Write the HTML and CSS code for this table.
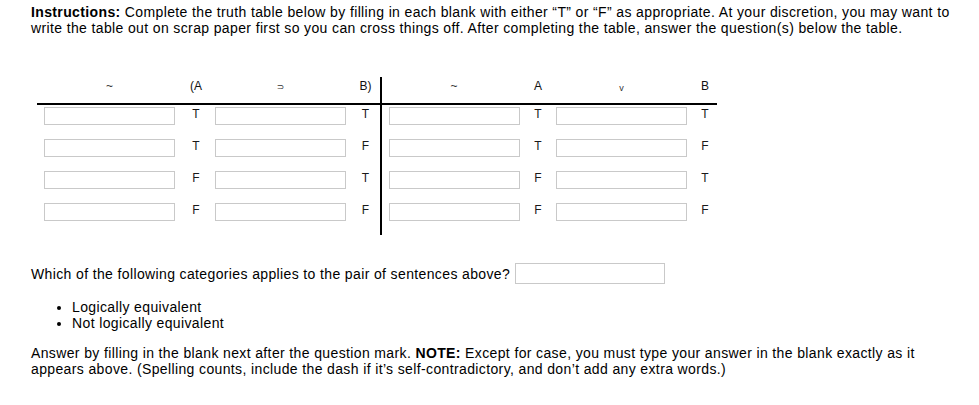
FILE: index.html
```html
<!DOCTYPE html>
<html>
<head>
<meta charset="utf-8">
<link rel="stylesheet" href="styles.css">
</head>
<body>
<div class="page">
  <p class="instr"><b>Instructions:</b> Complete the truth table below by filling in each blank with either “T” or “F” as appropriate. At your discretion, you may want to write the table out on scrap paper first so you can cross things off. After completing the table, answer the question(s) below the table.</p>

  <div class="tt">
    <div class="half left">
      <div class="row head">
        <span class="sym tilde">~</span>
        <span class="hl">(A</span>
        <span class="sym hook">⊃</span>
        <span class="hl">B)</span>
      </div>
      <div class="row"><span class="cell"><input class="blank" type="text"></span><span class="val">T</span><span class="cell"><input class="blank" type="text"></span><span class="val">T</span></div>
      <div class="row"><span class="cell"><input class="blank" type="text"></span><span class="val">T</span><span class="cell"><input class="blank" type="text"></span><span class="val">F</span></div>
      <div class="row"><span class="cell"><input class="blank" type="text"></span><span class="val">F</span><span class="cell"><input class="blank" type="text"></span><span class="val">T</span></div>
      <div class="row"><span class="cell"><input class="blank" type="text"></span><span class="val">F</span><span class="cell"><input class="blank" type="text"></span><span class="val">F</span></div>
    </div>
    <div class="half right">
      <div class="row head">
        <span class="sym tilde">~</span>
        <span class="hl">A</span>
        <span class="sym vee">v</span>
        <span class="hl">B</span>
      </div>
      <div class="row"><span class="cell"><input class="blank" type="text"></span><span class="val">T</span><span class="cell"><input class="blank" type="text"></span><span class="val">T</span></div>
      <div class="row"><span class="cell"><input class="blank" type="text"></span><span class="val">T</span><span class="cell"><input class="blank" type="text"></span><span class="val">F</span></div>
      <div class="row"><span class="cell"><input class="blank" type="text"></span><span class="val">F</span><span class="cell"><input class="blank" type="text"></span><span class="val">T</span></div>
      <div class="row"><span class="cell"><input class="blank" type="text"></span><span class="val">F</span><span class="cell"><input class="blank" type="text"></span><span class="val">F</span></div>
    </div>
  </div>

  <div class="question">
    <span class="qtext">Which of the following categories applies to the pair of sentences above?</span>
    <input class="answer" type="text">
  </div>

  <ul class="choices">
    <li>Logically equivalent</li>
    <li>Not logically equivalent</li>
  </ul>

  <p class="note">Answer by filling in the blank next after the question mark. <b>NOTE:</b> Except for case, you must type your answer in the blank exactly as it appears above. (Spelling counts, include the dash if it’s self-contradictory, and don’t add any extra words.)</p>
</div>
</body>
</html>
```

FILE: styles.css
```css
html, body {
  margin: 0;
  padding: 0;
  background: #ffffff;
}

body {
  font-family: "Liberation Sans", Arial, Helvetica, sans-serif;
  font-size: 14px;
  line-height: 16px;
  color: #000000;
}

.page {
  padding: 4px 0 0 31px;
  width: 926px;
}

.instr,
.qtext,
.choices,
.note {
  letter-spacing: 0.37px;
}

.instr {
  margin: 0;
}

.tt {
  display: flex;
  margin: 41px 0 0 6px;
  width: 680px;
}

.half {
  padding-bottom: 2px;
}

.left {
  width: 343px;
}

.right {
  width: 337px;
  border-left: 2px solid #000;
  box-sizing: border-box;
}

.left .row {
  display: grid;
  grid-template-columns: 145px 28px 141px 29px;
}

.right .row {
  display: grid;
  grid-template-columns: 144px 24px 143px 24px;
}

.row {
  height: 32px;
  align-items: start;
  justify-items: center;
}

.row.head {
  padding-top: 1px;
  box-sizing: border-box;
  border-bottom: 2px solid #000;
  height: 28px;
  font-size: 12px;
  line-height: 16px;
  color: #111;
}

.sym {
  font-family: "DejaVu Sans", sans-serif;
  font-size: 9px;
  color: #333;
  padding-top: 1px;
}

.tilde {
  font-family: "Liberation Sans", sans-serif;
  font-size: 12px;
  padding-top: 0;
}

.vee {
  font-family: "Liberation Sans", sans-serif;
  font-size: 9px;
  padding-top: 2px;
}

.hl {
  font-size: 12px;
}

.cell {
  display: flex;
  justify-content: center;
  width: 100%;
  padding-top: 2px;
}

.val {
  font-size: 12px;
  line-height: 16px;
  padding-top: 1px;
  color: #1a1a1a;
}

.blank {
  width: 131px;
  height: 18px;
  box-sizing: border-box;
  border: 1px solid #c9c9c9;
  margin: 0;
  padding: 0;
  background: #fff;
}

.question {
  display: flex;
  align-items: center;
  margin-top: 28px;
  height: 21px;
}

.answer {
  width: 150px;
  height: 21px;
  box-sizing: border-box;
  border: 1px solid #c9c9c9;
  margin: 0 0 0 5px;
  padding: 0;
  background: #fff;
}

.choices {
  margin: 15px 0 0 0;
  padding-left: 41px;
}

.note {
  margin: 14px 0 0 0;
}
```
